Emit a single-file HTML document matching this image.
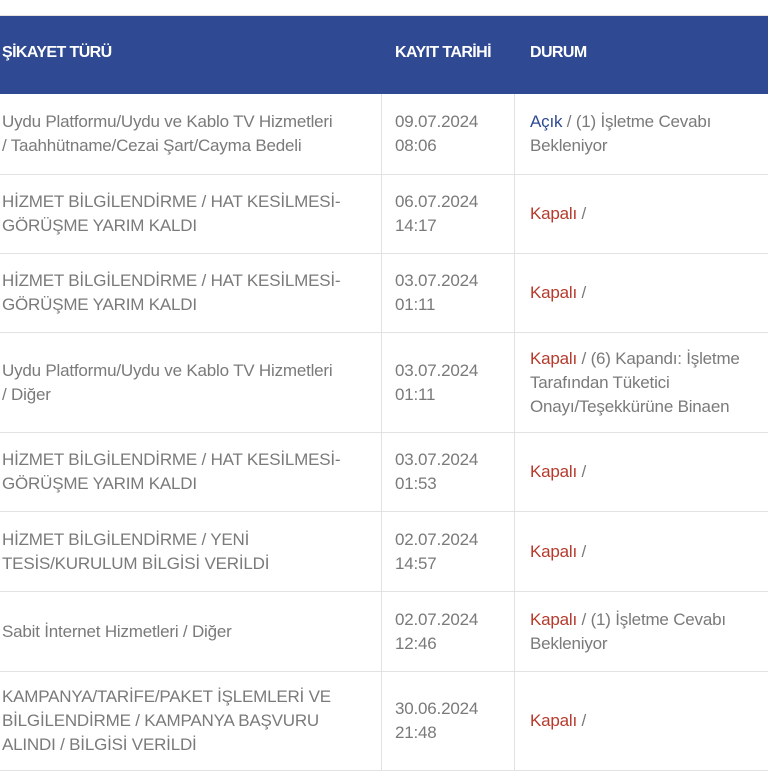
<!DOCTYPE html>
<html><head><meta charset="utf-8"><style>
body{margin:0;width:768px;height:768px;overflow:hidden;background:#fff;font-family:"Liberation Sans",sans-serif;}
.hd{position:absolute;top:15px;left:0;width:768px;height:78px;background:#2f4a93;border-top:1px solid #e8e0dc;color:#fff;font-size:16px;font-weight:bold;}
.hd span{position:absolute;top:28px;letter-spacing:-0.6px}
.row{position:absolute;left:0;width:768px;border-bottom:1px solid #e2e2e2;color:#7a7a7a;font-size:17px;line-height:24px;letter-spacing:-0.2px}
.c{position:absolute;top:0;bottom:0;display:flex;align-items:center}
.c1{left:2px;width:360px}
.c2{left:381px;width:134px;border-left:1px solid #e2e2e2;border-right:1px solid #e2e2e2;padding-left:13px;box-sizing:border-box}
.c3{left:530px;width:236px}
.r{color:#b53a2c}.b{color:#2f4a93}
</style></head><body>
<div class="hd"><span style="left:2px">ŞİKAYET TÜRÜ</span><span style="left:395px">KAYIT TARİHİ</span><span style="left:530px">DURUM</span></div>
<div class="row" style="top:94px;height:80px"><div class="c c1"><div>Uydu Platformu/Uydu ve Kablo TV Hizmetleri<br>/ Taahhütname/Cezai Şart/Cayma Bedeli</div></div><div class="c c2">09.07.2024<br>08:06</div><div class="c c3"><div><span class="b">Açık</span> / (1) İşletme Cevabı Bekleniyor</div></div></div>
<div class="row" style="top:175px;height:78px"><div class="c c1">HİZMET BİLGİLENDİRME / HAT KESİLMESİ-GÖRÜŞME YARIM KALDI</div><div class="c c2">06.07.2024<br>14:17</div><div class="c c3"><div><span class="r">Kapalı</span> /</div></div></div>
<div class="row" style="top:254px;height:78px"><div class="c c1">HİZMET BİLGİLENDİRME / HAT KESİLMESİ-GÖRÜŞME YARIM KALDI</div><div class="c c2">03.07.2024<br>01:11</div><div class="c c3"><div><span class="r">Kapalı</span> /</div></div></div>
<div class="row" style="top:333px;height:99px"><div class="c c1"><div>Uydu Platformu/Uydu ve Kablo TV Hizmetleri<br>/ Diğer</div></div><div class="c c2">03.07.2024<br>01:11</div><div class="c c3"><div><span class="r">Kapalı</span> / (6) Kapandı: İşletme Tarafından Tüketici Onayı/Teşekkürüne Binaen</div></div></div>
<div class="row" style="top:433px;height:78px"><div class="c c1">HİZMET BİLGİLENDİRME / HAT KESİLMESİ-GÖRÜŞME YARIM KALDI</div><div class="c c2">03.07.2024<br>01:53</div><div class="c c3"><div><span class="r">Kapalı</span> /</div></div></div>
<div class="row" style="top:512px;height:79px"><div class="c c1">HİZMET BİLGİLENDİRME / YENİ TESİS/KURULUM BİLGİSİ VERİLDİ</div><div class="c c2">02.07.2024<br>14:57</div><div class="c c3"><div><span class="r">Kapalı</span> /</div></div></div>
<div class="row" style="top:592px;height:79px"><div class="c c1">Sabit İnternet Hizmetleri / Diğer</div><div class="c c2">02.07.2024<br>12:46</div><div class="c c3"><div><span class="r">Kapalı</span> / (1) İşletme Cevabı Bekleniyor</div></div></div>
<div class="row" style="top:672px;height:98px"><div class="c c1">KAMPANYA/TARİFE/PAKET İŞLEMLERİ VE BİLGİLENDİRME / KAMPANYA BAŞVURU ALINDI / BİLGİSİ VERİLDİ</div><div class="c c2">30.06.2024<br>21:48</div><div class="c c3"><div><span class="r">Kapalı</span> /</div></div></div>
</body></html>
